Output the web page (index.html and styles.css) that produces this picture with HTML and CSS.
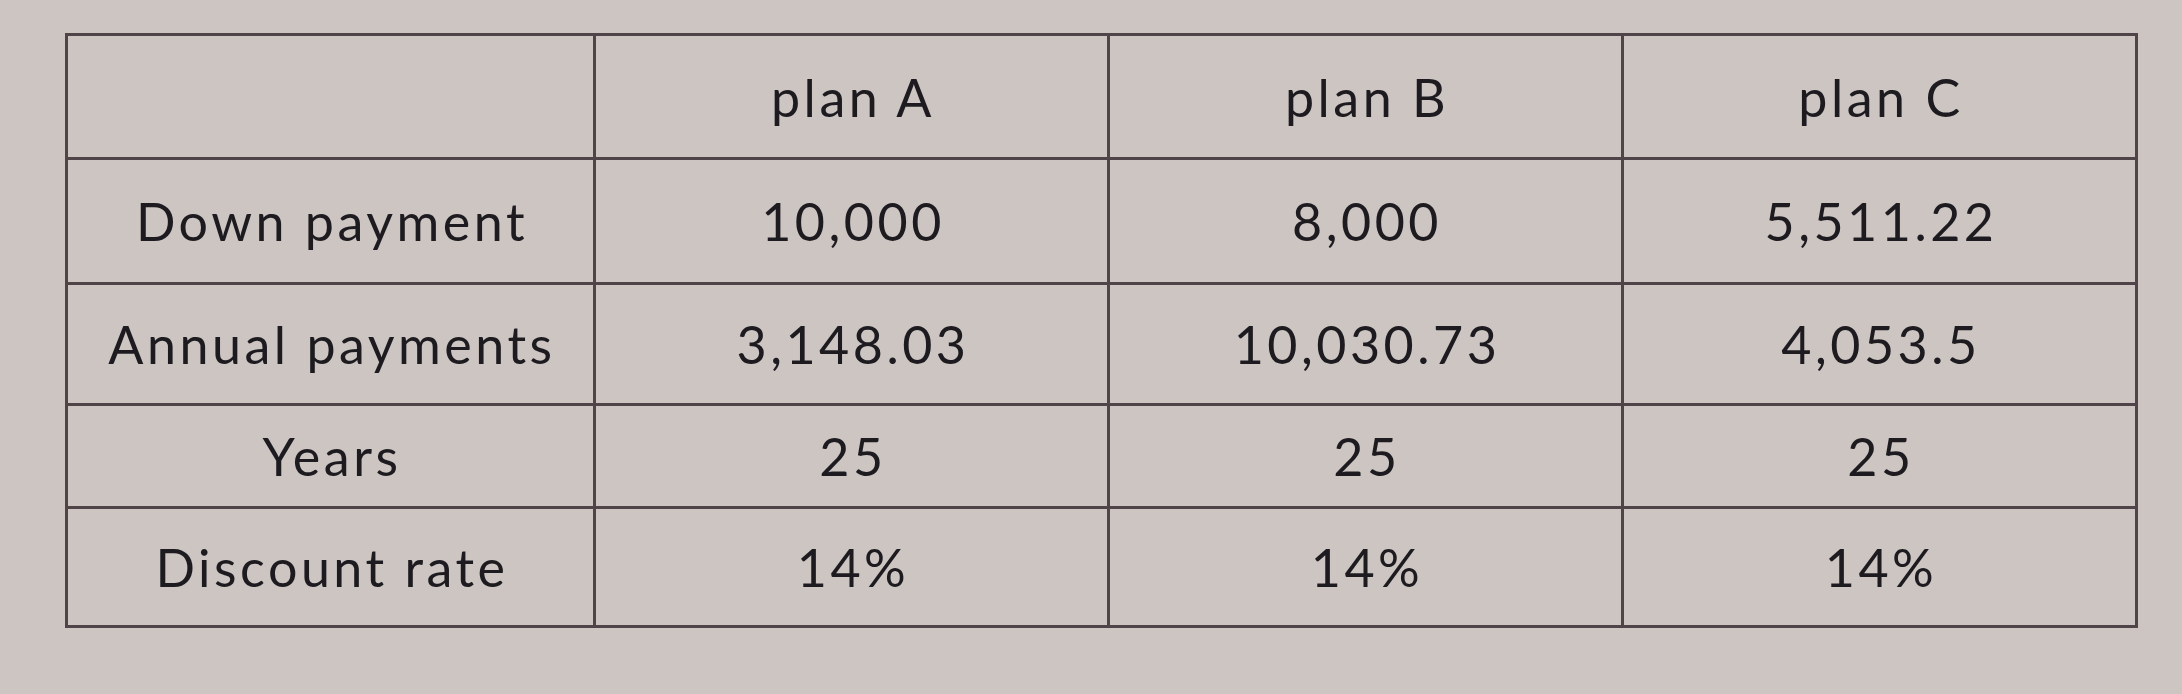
FILE: index.html
```html
<!DOCTYPE html>
<html lang="en">
<head>
<meta charset="utf-8">
<title>Plans</title>
<link rel="stylesheet" href="styles.css">
</head>
<body>
<main class="page">
  <table class="plans">
    <colgroup>
      <col class="col-label">
      <col class="col-plan">
      <col class="col-plan">
      <col class="col-plan">
    </colgroup>
    <tr class="row row-head">
      <th></th>
      <th>plan A</th>
      <th>plan B</th>
      <th>plan C</th>
    </tr>
    <tr class="row row-down">
      <td>Down payment</td>
      <td>10,000</td>
      <td>8,000</td>
      <td>5,511.22</td>
    </tr>
    <tr class="row row-annual">
      <td>Annual payments</td>
      <td>3,148.03</td>
      <td>10,030.73</td>
      <td>4,053.5</td>
    </tr>
    <tr class="row row-years">
      <td>Years</td>
      <td>25</td>
      <td>25</td>
      <td>25</td>
    </tr>
    <tr class="row row-rate">
      <td>Discount rate</td>
      <td>14%</td>
      <td>14%</td>
      <td>14%</td>
    </tr>
  </table>
</main>
</body>
</html>
```
FILE: styles.css
```css
html, body {
  margin: 0;
  padding: 0;
  background: #ccc5c2;
}

.page {
  padding: 33px 0 0 65px;
}

.plans {
  width: 2071px;
  border-collapse: collapse;
  table-layout: fixed;
  border: 3px solid #4a4145;
  font-family: Lato, "Liberation Sans", sans-serif;
  font-size: 52px;
  letter-spacing: 3.5px;
  color: #1d1b1f;
}

.col-label { width: 528px; }
.col-plan { width: 514px; }

.plans th,
.plans td {
  border: 3px solid #4f4548;
  text-align: center;
  vertical-align: middle;
  padding: 0 0 0 3px;
  font-weight: 400;
  line-height: 1;
}

.row-head { height: 124px; }
.row-down { height: 125px; }
.row-annual { height: 121px; }
.row-years { height: 103px; }
.row-rate { height: 119px; }
```
